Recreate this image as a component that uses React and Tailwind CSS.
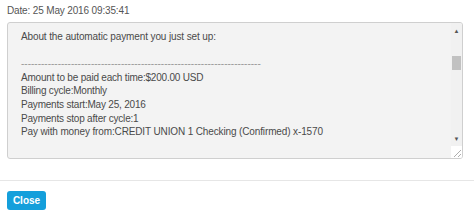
const lines = [
  "About the automatic payment you just set up:",
  "",
  "-".repeat(72),
  "Amount to be paid each time:$200.00 USD",
  "Billing cycle:Monthly",
  "Payments start:May 25, 2016",
  "Payments stop after cycle:1",
  "Pay with money from:CREDIT UNION 1 Checking (Confirmed) x-1570",
];

export default function App() {
  return (
    <div className="w-[474px] h-[221px] bg-white font-['Liberation_Sans',Arial,sans-serif] text-[10px] text-[#555]">
      <div className="px-[7px] pt-[4px] h-[22px] leading-[13px] tracking-[-0.15px]">Date: 25 May 2016 09:35:41</div>

      {/* fake textarea */}
      <div className="mx-[7px] w-[456px] h-[137px] flex border border-[#cfcfcf] rounded-[3px] bg-[#f3f3f3] overflow-hidden">
        <div className="flex-1 pl-[13px] pt-[7px] leading-[13.6px] text-[#4a4a4a] whitespace-pre overflow-hidden tracking-[-0.2px]">
          {lines.map((l, i) => (
            <div
              key={i}
              className={
                i === 0 ? "tracking-[-0.12px]" : i === 2 ? "text-[#999] tracking-[0px]" : i === 7 ? "tracking-[-0.13px]" : ""
              }
            >
              {l || "\u00a0"}
            </div>
          ))}
        </div>
        <div className="w-[11px] flex flex-col bg-[#f1f1f1]">
          <div className="h-[15px] flex items-center justify-center text-[6px] text-[#555] leading-none">▲</div>
          <div className="mt-[18px] h-[14px] bg-[#c1c1c1] mx-[1px]" />
          <div className="flex-1" />
          <div className="h-[14px] flex items-center justify-center text-[6px] text-[#555] leading-none">▼</div>
          <div className="h-[12px] bg-white relative">
            <svg width="11" height="12" className="absolute inset-0">
              <path d="M3 11 L10 4 M7 11 L10 8" stroke="#999" strokeWidth="0.8" />
            </svg>
          </div>
        </div>
      </div>

      <div className="mt-[21px] border-t border-[#e6e6e6]" />

      <div className="px-[7px] pt-[10px]">
        <button className="w-[39px] h-[19px] rounded-[3px] bg-[#149fdb] text-white font-bold text-[10px] leading-none">
          Close
        </button>
      </div>
    </div>
  );
}
